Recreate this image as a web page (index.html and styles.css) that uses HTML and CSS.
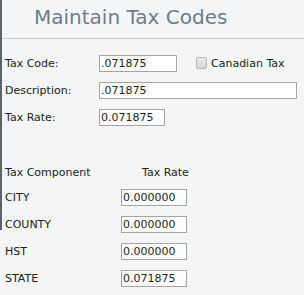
FILE: index.html
```html
<!DOCTYPE html>
<html lang="en">
<head>
    <meta charset="UTF-8">
    <title>Maintain Tax Codes</title>
    <link rel="stylesheet" href="styles.css">
</head>
<body>
    <div class="side-bar"></div>
    <div class="page">
        <div class="heading">
            <h1>Maintain Tax Codes</h1>
        </div>
        <div class="form">
            <div class="row">
                <label>Tax Code:</label>
                <input class="code" type="text" value=".071875">
                <span class="check"><span class="box"></span>Canadian Tax</span>
            </div>
            <div class="row">
                <label>Description:</label>
                <input class="desc" type="text" value=".071875">
            </div>
            <div class="row">
                <label>Tax Rate:</label>
                <input class="rate" type="text" value="0.071875">
            </div>
        </div>
        <div class="components">
            <div class="comp-head">
                <span>Tax Component</span>
                <span class="rate-head">Tax Rate</span>
            </div>
            <div class="comp"><span>CITY</span><input type="text" value="0.000000"></div>
            <div class="comp"><span>COUNTY</span><input type="text" value="0.000000"></div>
            <div class="comp"><span>HST</span><input type="text" value="0.000000"></div>
            <div class="comp"><span>STATE</span><input type="text" value="0.071875"></div>
        </div>
    </div>
</body>
</html>
```

FILE: styles.css
```css
body{
    margin: 0;
    background: #f4f5f7;
    font-family: "DejaVu Sans", Verdana, sans-serif;
    font-size: 11px;
    color: #222;
    display: flex;
    align-items: flex-start;
}
.side-bar{
    width: 2px;
    height: 230px;
    background: #5a6470;
    flex-shrink: 0;
}
.page{
    flex: 1;
}
.heading{
    height: 38px;
    border-bottom: 1px solid #c8ccd0;
}
.heading h1{
    margin: 0;
    padding: 5px 0 0 32px;
    font-size: 20px;
    font-weight: normal;
    color: #6d7c8d;
}
.form{
    padding: 11px 0 0 3px;
}
.row{
    display: flex;
    align-items: center;
    height: 27px;
}
.row label{
    width: 94px;
}
input{
    font-family: "DejaVu Sans", Verdana, sans-serif;
    font-size: 11px;
    height: 17px;
    box-sizing: border-box;
    border: 1px solid #a3a6a9;
    background: #fff;
    padding: 0 1px;
    margin: 0;
    color: #222;
}
.code{ width: 78px; }
.desc{ width: 198px; }
.rate{ width: 66px; }
.check{
    display: flex;
    align-items: center;
    margin-left: 19px;
}
.box{
    width: 11px;
    height: 12px;
    box-sizing: border-box;
    border: 1px solid #b5b8bb;
    border-radius: 2px;
    background: linear-gradient(#e9eaeb, #d4d6d8);
    margin: -2px 4px 0 0;
}
.components{
    padding: 29px 0 0 3px;
}
.comp-head{
    display: flex;
    height: 24px;
    align-items: center;
}
.comp-head span{ width: 137px; }
.comp-head .rate-head{ width: auto; }
.comp{
    display: flex;
    align-items: center;
    height: 27px;
}
.comp span{ width: 116px; }
.comp input{ width: 66px; }
```
